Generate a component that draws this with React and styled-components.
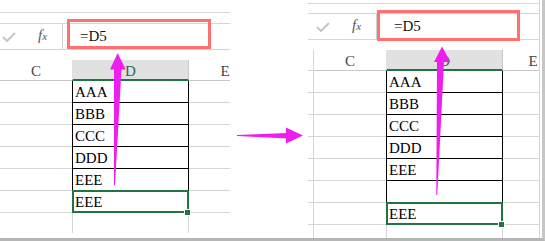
import React from 'react';
import styled, { createGlobalStyle, css } from 'styled-components';

const GRID = '#d6d6d6';
const GREEN = '#217346';
const PINK = '#ee1fee';

const GlobalStyle = createGlobalStyle`
    * {
        box-sizing: border-box;
    }
    body {
        margin: 0;
        background: #fff;
        font-family: 'Liberation Serif', 'Times New Roman', serif;
    }
`;

const Frame = styled.div`
    position: relative;
    display: flex;
    width: 545px;
    height: 241px;
    overflow: hidden;
    background: #fff;
    border-right: 3px solid #c6c6c6;
    border-bottom: 3px solid #b6b6b6;
`;

const Sheet = styled.div`
    display: flex;
    flex-direction: column;
    flex-shrink: 0;
    width: ${(props) => props.$width}px;
    margin-left: ${(props) => props.$shift}px;
    padding-top: ${(props) => props.$top}px;
    padding-bottom: ${(props) => props.$bottom}px;
    border-right: ${(props) => (props.$edge ? `1px solid ${GRID}` : 'none')};
    overflow: hidden;
`;

const TopRule = styled.div`
    flex-shrink: 0;
    height: ${(props) => props.$gap}px;
    border-top: 1px solid ${GRID};
`;

const FormulaRow = styled.div`
    position: relative;
    display: flex;
    flex-shrink: 0;
    height: 27px;
    border-top: 1px solid ${GRID};
    border-bottom: 1px solid ${GRID};
`;

const Tools = styled.div`
    display: flex;
    align-items: center;
    gap: 22px;
    width: 69px;
    flex-shrink: 0;
    padding-left: 8px;
    border-right: 1px solid #cfcfcf;
`;

const Fx = styled.span`
    margin-top: -3px;
    font-size: 15px;
    font-style: italic;
    line-height: 1;
    color: #555;
    white-space: nowrap;
`;

const FxSub = styled.span`
    font-size: 11px;
`;

const FormulaText = styled.div`
    padding-left: 17px;
    font-size: 15px;
    line-height: 25px;
    color: #111;
`;

const RedMark = styled.div`
    position: absolute;
    left: ${(props) => props.$x}px;
    top: ${(props) => props.$y}px;
    width: ${(props) => props.$w}px;
    height: ${(props) => props.$h}px;
    border: 3px solid #ff7171;
    pointer-events: none;
`;

const Spacer = styled.div`
    flex-shrink: 0;
    height: 10px;
`;

const Line = styled.div`
    display: flex;
    flex-shrink: 0;
    height: ${(props) => props.$h}px;
`;

const FillerRow = styled.div`
    display: flex;
    flex: 1;
`;

const RowHead = styled.div`
    width: 6px;
    flex-shrink: 0;
    border-right: 1px solid ${GRID};
    border-bottom: ${(props) => (props.$open ? 'none' : `1px solid ${GRID}`)};
`;

const ColHead = styled.div`
    width: ${(props) => props.$w}px;
    flex-shrink: 0;
    padding-top: 1px;
    text-align: center;
    font-size: 15px;
    line-height: 20px;
    color: ${(props) => (props.$active ? '#1d6b4e' : '#444')};
    background: ${(props) => (props.$active ? '#e1e1e1' : '#fff')};
    border-bottom: ${(props) => (props.$active ? `2px solid ${GREEN}` : '1px solid #c8c8c8')};
    border-left: ${(props) => (props.$active ? '1px solid transparent' : 'none')};
    border-right: ${(props) => (props.$active ? '1px solid #c8c8c8' : 'none')};
`;

const GridCell = styled.div`
    width: ${(props) => props.$w}px;
    flex-shrink: 0;
    border-bottom: 1px solid ${GRID};
`;

const DataCell = styled.div`
    position: relative;
    width: 117px;
    flex-shrink: 0;
    padding: 1px 0 0 2px;
    font-size: 15px;
    line-height: 21px;
    color: #000;
    white-space: nowrap;
    border: 1px solid #000;
    border-top: none;

    ${(props) =>
        props.$selected &&
        css`
            &::after {
                content: '';
                position: absolute;
                top: -1px;
                left: -1px;
                right: -1px;
                bottom: -1px;
                border: 2px solid ${GREEN};
                z-index: 1;
            }
            &::before {
                content: '';
                position: absolute;
                right: -2px;
                bottom: -3px;
                width: 5px;
                height: 5px;
                background: ${GREEN};
                box-shadow: 0 0 0 1px #fff;
                z-index: 2;
            }
        `}
`;

const FillCell = styled.div`
    width: ${(props) => props.$w}px;
    flex-shrink: 0;
    border-left: ${(props) => (props.$ruled ? `1px solid ${GRID}` : 'none')};
    border-right: ${(props) => (props.$ruled ? `1px solid ${GRID}` : 'none')};
`;

const Overlay = styled.svg`
    position: absolute;
    left: 0;
    top: 0;
    z-index: 5;
    pointer-events: none;
`;

const Check = () => (
    <svg width="14" height="10" viewBox="0 0 14 10">
        <polyline points="1,5 5,9 13,1" fill="none" stroke="#c6c6c6" strokeWidth="2" />
    </svg>
);

const Panel = ({ layout, rows }) => (
    <Sheet
        $width={layout.width}
        $shift={layout.shift}
        $top={layout.top}
        $bottom={layout.bottom}
        $edge={layout.edge}
    >
        <TopRule $gap={layout.gap} />
        <FormulaRow>
            <Tools>
                <Check />
                <Fx>
                    f<FxSub>x</FxSub>
                </Fx>
            </Tools>
            <FormulaText>=D5</FormulaText>
            <RedMark $x={layout.mark.x} $y={layout.mark.y} $w={layout.mark.w} $h={layout.mark.h} />
        </FormulaRow>
        <Spacer />
        <Line $h={21}>
            <RowHead />
            <ColHead $w={72}>C</ColHead>
            <ColHead $w={117} $active>
                D
            </ColHead>
            <ColHead $w={layout.lastCol}>E</ColHead>
        </Line>
        {rows.map((value, index) => (
            <Line $h={22} key={index}>
                <RowHead />
                <GridCell $w={72} />
                <DataCell $selected={index === rows.length - 1}>{value}</DataCell>
                <GridCell $w={layout.lastCol} />
            </Line>
        ))}
        <FillerRow>
            <RowHead $open />
            <FillCell $w={72} />
            <FillCell $w={117} $ruled />
            <FillCell $w={layout.lastCol} />
        </FillerRow>
    </Sheet>
);

const before = {
    width: 236,
    shift: -6,
    top: 12,
    gap: 11,
    bottom: 5,
    edge: false,
    lastCol: 72,
    mark: { x: 73, y: -5, w: 144, h: 30 },
};

const after = {
    width: 232,
    shift: 78,
    top: 3,
    gap: 10,
    bottom: 0,
    edge: true,
    lastCol: 60,
    mark: { x: 69, y: -4, w: 143, h: 31 },
};

const App = () => {
    return (
        <>
            <GlobalStyle />
            <Frame>
                <Panel layout={before} rows={['AAA', 'BBB', 'CCC', 'DDD', 'EEE', 'EEE']} />
                <Panel layout={after} rows={['AAA', 'BBB', 'CCC', 'DDD', 'EEE', '', 'EEE']} />
                <Overlay width="545" height="241" viewBox="0 0 545 241">
                    <g fill={PINK}>
                        {/* left: up arrow */}
                        <polygon points="110,69.5 117.7,53 125.7,69.5" />
                        <polygon points="114,69 121.5,69 115,185 114,185" />
                        {/* middle: right arrow */}
                        <polygon points="237,135 287,133 287,138.5 237,136" />
                        <polygon points="286,127.5 303,135.5 286,143.5" />
                        {/* right: up arrow */}
                        <polygon points="434,62 442,46.5 450.5,62" />
                        <polygon points="437,61.5 444,61.5 437.3,195 436.3,195" />
                    </g>
                </Overlay>
            </Frame>
        </>
    );
};

export default App;
